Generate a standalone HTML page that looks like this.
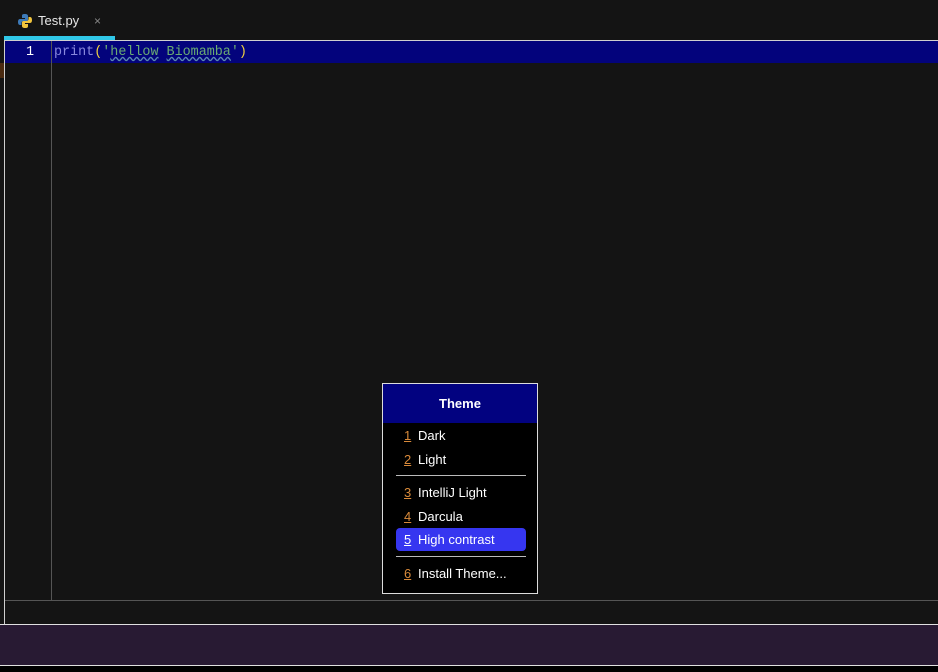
<!DOCTYPE html>
<html><head><style>
body{margin:0;width:938px;height:672px;background:#141414;position:relative;overflow:hidden;font-family:"Liberation Sans",sans-serif}
div{position:absolute;box-sizing:border-box}
.mono{font-family:"Liberation Mono",monospace;font-size:13.4px}
.it{left:13px;height:24px;width:130px;color:#fff;font-size:13px;line-height:24px}
.it u{color:#d98a3a;text-decoration:underline;margin-right:8px;display:inline-block;width:6px;margin-left:8px}
.w{text-decoration:underline wavy #5a8ab0}
</style></head><body>
<div style="left:0;top:0;width:938px;height:40px;background:#141414"></div>
<svg style="position:absolute;left:17px;top:13px" width="16" height="16" viewBox="0 0 16 16"><path d="M8 1C5 1 5 2 5 3v2h3v1H3C1.5 6 1 7.5 1 9s.5 3 2 3h1.5v-2c0-1.2 1-2 2-2h3c1 0 1.5-.6 1.5-1.5V3c0-1-.8-2-3-2z" fill="#3d7ab8"/><path d="M8 15c3 0 3-1 3-2v-2H8v-1h5c1.5 0 2-1.5 2-3s-.5-3-2-3h-1.5v2c0 1.2-1 2-2 2h-3C5.5 8 5 8.6 5 9.5V13c0 1 .8 2 3 2z" fill="#f2c53d"/></svg>
<div style="left:38px;top:12px;color:#e6e6e6;font-size:13px;line-height:18px">Test.py</div>
<div style="left:94px;top:12px;color:#888;font-size:12px;line-height:18px">×</div>
<div style="left:4px;top:36px;width:111px;height:4px;background:#30c8e8"></div>
<div style="left:4px;top:40px;width:934px;height:1px;background:#cfcfcf"></div>
<div style="left:4px;top:40px;width:1px;height:585px;background:#cfcfcf"></div>
<div style="left:5px;top:41px;width:933px;height:22px;background:#03037c"></div>
<div style="left:0;top:63px;width:4px;height:15px;background:#4a2a10"></div>
<div style="left:51px;top:41px;width:1px;height:559px;background:#555"></div>
<div class="mono" style="left:26px;top:45px;color:#fff;line-height:16px">1</div>
<div class="mono" style="left:54px;top:45px;line-height:16px;color:#8888dd">print<span style="color:#f0d040">(</span><span style="color:#6aab73">'<span class="w">hellow</span> <span class="w">Biomamba</span>'</span><span style="color:#f0d040">)</span></div>
<div style="left:5px;top:600px;width:933px;height:1px;background:#555"></div>
<div style="left:0;top:624px;width:938px;height:1px;background:#e0e0e0"></div>
<div style="left:0;top:625px;width:938px;height:40px;background:#281a33"></div>
<div style="left:0;top:665px;width:938px;height:1px;background:#e0e0e0"></div>
<div style="left:0;top:666px;width:938px;height:6px;background:#000"></div>
<div style="left:382px;top:383px;width:156px;height:211px;background:#000;border:1px solid #ddd">
 <div style="left:0;top:0;width:154px;height:39px;background:#020280;color:#fff;font-weight:bold;font-size:13px;text-align:center;line-height:40px">Theme</div>
 <div class="it" style="top:40px"><u>1</u>Dark</div>
 <div class="it" style="top:64px"><u>2</u>Light</div>
 <div style="left:13px;top:91px;width:130px;height:1px;background:#bbb"></div>
 <div class="it" style="top:97px"><u>3</u>IntelliJ Light</div>
 <div class="it" style="top:121px"><u>4</u>Darcula</div>
 <div class="it" style="top:144px;height:23px;background:#3636f0;border-radius:4px;line-height:23px"><u style="color:#fff">5</u>High contrast</div>
 <div style="left:13px;top:172px;width:130px;height:1px;background:#bbb"></div>
 <div class="it" style="top:178px"><u>6</u>Install Theme...</div>
</div>
</body></html>
